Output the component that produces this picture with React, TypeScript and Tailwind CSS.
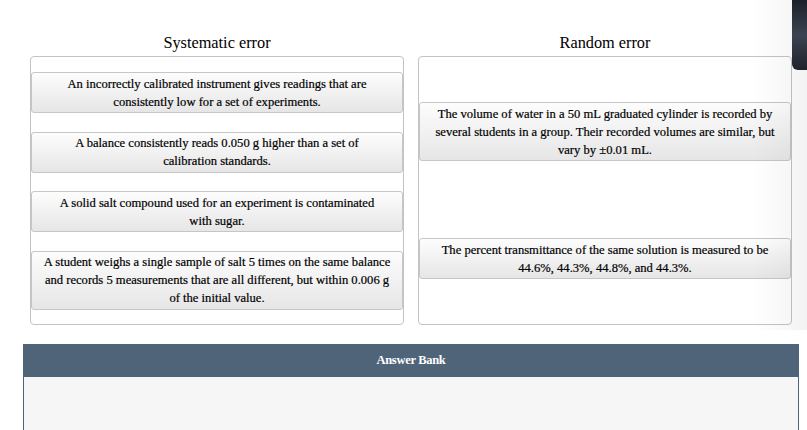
import React from "react";

const serif = { fontFamily: '"Liberation Serif", "Times New Roman", Times, serif' };

function Card({ children }: { children: React.ReactNode }) {
  return (
    <div className="border border-[#c6c6c6] rounded-[3px] bg-gradient-to-b from-[#fdfdfd] to-[#e6e6e6] px-0 py-[1.5px] text-center text-[12.6px] leading-[18px] text-black [-webkit-text-stroke:0.2px_#000] whitespace-nowrap">
      {children}
    </div>
  );
}

export default function App() {
  return (
    <div className="relative w-[807px] h-[430px] overflow-hidden bg-white" style={serif}>
      <div className="pl-[30px] pr-[15px] pt-[30px]">
        <div className="flex gap-[14px]">
          <div className="w-[374px] flex flex-col">
            <div className="text-center text-[16.3px] leading-[26px] text-black">Systematic error</div>
            <div className="border border-[#c3c3c3] rounded-[4px] h-[269px] pt-[15px] flex flex-col gap-[18.5px]">
              <Card>
                An incorrectly calibrated instrument gives readings that are
                <br />
                consistently low for a set of experiments.
              </Card>
              <Card>
                A balance consistently reads 0.050 g higher than a set of
                <br />
                calibration standards.
              </Card>
              <Card>
                A solid salt compound used for an experiment is contaminated
                <br />
                with sugar.
              </Card>
              <Card>
                A student weighs a single sample of salt 5 times on the same balance
                <br />
                and records 5 measurements that are all different, but within 0.006 g
                <br />
                of the initial value.
              </Card>
            </div>
          </div>
          <div className="w-[374px] flex flex-col">
            <div className="text-center text-[16.3px] leading-[26px] text-black">Random error</div>
            <div className="border border-[#c3c3c3] rounded-[4px] h-[269px] pt-[45px] flex flex-col gap-[77px]">
              <Card>
                The volume of water in a 50 mL graduated cylinder is recorded by
                <br />
                several students in a group. Their recorded volumes are similar, but
                <br />
                vary by ±0.01 mL.
              </Card>
              <Card>
                The percent transmittance of the same solution is measured to be
                <br />
                44.6%, 44.3%, 44.8%, and 44.3%.
              </Card>
            </div>
          </div>
        </div>
      </div>
      <div className="ml-[23px] w-[776px] mt-[19px]">
        <div className="h-[33px] bg-[#4f6479] flex items-center justify-center text-white text-[12.5px] font-bold tracking-[-0.3px]">
          Answer Bank
        </div>
        <div className="h-[60px] bg-[#f6f6f6] border-l border-r border-[#4f6479]"></div>
      </div>
      <div className="absolute top-0 right-0 w-[55px] h-[330px] bg-gradient-to-r from-transparent to-[#0000000c] pointer-events-none"></div>
      <div className="absolute top-0 right-0 w-[15px] h-[70px] rounded-bl-[6px] bg-gradient-to-b from-[#1c2129] via-[#3b4452] to-[#1e232b]"></div>
    </div>
  );
}
